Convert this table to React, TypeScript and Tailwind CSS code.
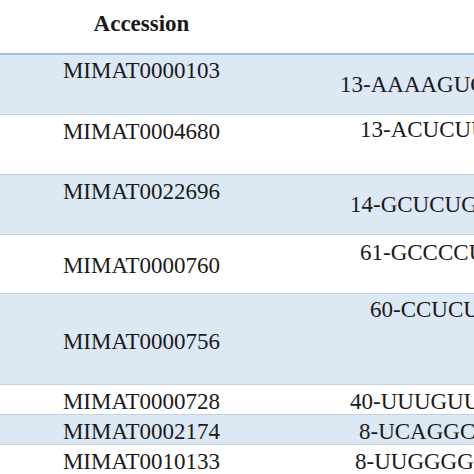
const rows = [
  { id: "MIMAT0000103", seq: "13-AAAAGUGCUUACAGUGCAGGUAG-35", h: "h-[60px]", bg: true, a: "pt-[3px]", b: "pt-[17px]", pl: "pl-[57px]" },
  { id: "MIMAT0004680", seq: "13-ACUCUUUCCCUGUUGCACUAC-33", h: "h-[60px]", bg: false, a: "pt-[4px]", b: "pt-[2px]", pl: "pl-[77px]" },
  { id: "MIMAT0022696", seq: "14-GCUCUGACUUUAUUGCACUACU-35", h: "h-[60px]", bg: true, a: "pt-[4px]", b: "pt-[17px]", pl: "pl-[67px]" },
  { id: "MIMAT0000760", seq: "61-GCCCCUGGGCCUAUCCUAGAA-81", h: "h-[59px]", bg: false, a: "pt-[18px]", b: "pt-[5px]", pl: "pl-[77px]" },
  { id: "MIMAT0000756", seq: "60-CCUCUGGGCCCUUCCUCCAG-79", h: "h-[91px]", bg: true, a: "pt-[35px]", b: "pt-[3px]", pl: "pl-[87px]" },
  { id: "MIMAT0000728", seq: "40-UUUGUUCGUUCGGCUCGCGUGA-61", h: "h-[30px]", bg: false, a: "pt-[4px]", b: "pt-[4px]", pl: "pl-[67px]" },
  { id: "MIMAT0002174", seq: "8-UCAGGCUCAGUCCCCUCCCGAU-29", h: "h-[30px]", bg: true, a: "pt-[4px]", b: "pt-[4px]", pl: "pl-[76px]" },
  { id: "MIMAT0010133", seq: "8-UUGGGGAAACGGCCGCUGAGUG-29", h: "h-[30px]", bg: false, a: "pt-[4px]", b: "pt-[4px]", pl: "pl-[72px]" },
];

export default function App() {
  return (
    <div className="w-[474px] h-[474px] overflow-hidden bg-white text-[#1a1a1a] text-[23px] leading-[26px] [font-family:'Liberation_Serif',serif]">
      <div className="flex h-[55px] border-b-2 border-[#9fbde0]">
        <div className="w-[283px] pt-[11px] text-center font-bold">Accession</div>
      </div>
      {rows.map((r) => (
        <div
          key={r.id}
          className={`flex ${r.h} border-b border-[#c2d1e2] ${r.bg ? "bg-[#dde8f5]" : "bg-white"}`}
        >
          <div className={`w-[283px] shrink-0 text-center ${r.a}`}>{r.id}</div>
          <div className={`flex-1 overflow-hidden whitespace-nowrap ${r.b} ${r.pl}`}>{r.seq}</div>
        </div>
      ))}
    </div>
  );
}
